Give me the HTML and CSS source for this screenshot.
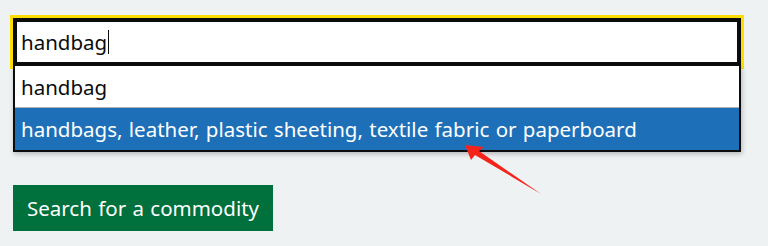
FILE: index.html
```html
<!DOCTYPE html>
<html lang="en">
<head>
    <meta charset="UTF-8">
    <meta name="viewport" content="width=device-width, initial-scale=1.0">
    <title>Search for a commodity</title>
    <link rel="stylesheet" href="styles.css">
</head>
<body>

    <div class="search-form">
        <!-- Autocomplete -->
        <div class="autocomplete">
            <div class="autocomplete-input">handbag<span class="caret"></span></div>
            <ul class="autocomplete-menu">
                <li class="autocomplete-option">handbag</li>
                <li class="autocomplete-option focused">handbags, leather, plastic sheeting, textile fabric or paperboard</li>
            </ul>
        </div>

        <button class="search-btn">Search for a commodity</button>
    </div>

    <!-- Annotation arrow -->
    <svg class="annotation" width="768" height="246" viewBox="0 0 768 246">
        <polygon points="465,145 484,147 479,151 541,194 475,155 471,160" fill="#f5241a"/>
    </svg>

</body>
</html>
```

FILE: styles.css
```css
body {
    font-family: "Noto Sans", Arial, sans-serif;
    margin: 0;
    padding: 0;
    background-color: #eff2f3;
    color: #0b0c0c;
}

.search-form {
    padding: 18px 0 0 13px;
}

/* Autocomplete */
.autocomplete {
    width: 728px;
}

.autocomplete-input {
    box-sizing: border-box;
    height: 48px;
    padding: 0 6px;
    border: 2px solid #0b0c0c;
    box-shadow: inset 0 0 0 2px #0b0c0c;
    outline: 3px solid #ffdd00;
    background-color: #fff;
    font-size: 20.5px;
    line-height: 44px;
    display: flex;
    align-items: center;
}

.caret {
    display: inline-block;
    width: 1px;
    height: 24px;
    margin-left: 1px;
    background-color: #0b0c0c;
}

.autocomplete-menu {
    position: relative;
    list-style: none;
    margin: 0;
    padding: 0;
    border: 2px solid #0b0c0c;
    border-top: 0;
    background-color: #fff;
    box-shadow: 1px 2px 5px rgba(0, 0, 0, 0.25);
}

.autocomplete-option {
    padding: 9px 6px 7px;
    font-size: 20.5px;
    line-height: 25px;
    word-spacing: 1px;
    border-bottom: 1px solid #b1b4b6;
}

.autocomplete-option.focused {
    background-color: #1d70b8;
    border-color: #1d70b8;
    color: #fff;
}

/* Search Button */
.search-btn {
    margin-top: 33px;
    height: 46px;
    padding: 0 14px;
    border: none;
    border-radius: 0;
    background-color: #00703c;
    box-shadow: 0 2px 0 #002d18;
    color: #fff;
    font-family: "Noto Sans", Arial, sans-serif;
    font-size: 20.5px;
    word-spacing: 1px;
    cursor: pointer;
}

.annotation {
    position: absolute;
    top: 0;
    left: 0;
    pointer-events: none;
}
```
